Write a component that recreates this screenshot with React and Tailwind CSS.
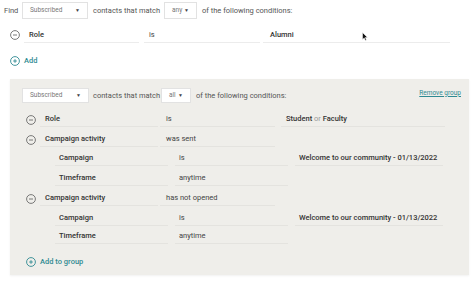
import React from "react";

const MinusIcon = () => (
  <svg width="10" height="10" viewBox="0 0 10 10" className="shrink-0">
    <circle cx="5" cy="5" r="4.4" fill="none" stroke="#6b6b6b" strokeWidth="0.9" />
    <line x1="3" y1="5" x2="7" y2="5" stroke="#6b6b6b" strokeWidth="0.9" />
  </svg>
);

const AddIcon = () => (
  <svg width="10" height="10" viewBox="0 0 10 10" className="shrink-0">
    <circle cx="5" cy="5" r="4.4" fill="none" stroke="#2f8a92" strokeWidth="0.9" />
    <line x1="3.2" y1="5" x2="6.8" y2="5" stroke="#2f8a92" strokeWidth="0.9" />
    <line x1="5" y1="3.2" x2="5" y2="6.8" stroke="#2f8a92" strokeWidth="0.9" />
  </svg>
);

const Dropdown = ({ label, className }) => (
  <div
    className={`flex items-center justify-between bg-white border border-[#e2e2e2] pl-[7px] pr-[7px] text-[6.5px] text-[#777] ${className}`}
  >
    <span>{label}</span>
    <span className="text-[5px] text-[#444]">▼</span>
  </div>
);

const Field = ({ className = "", line = "border-[#e4e3df]", children }) => (
  <div className={`h-[15px] flex items-center border-b ${line} ${className}`}>
    {children}
  </div>
);

const MainRow = ({ h, label, op, value }) => (
  <div className={`flex items-center pl-[16px] ${h}`}>
    <MinusIcon />
    <Field className="ml-[4px] w-[118px] pl-[5px] font-medium text-[#333]">{label}</Field>
    <Field className="ml-[2px] w-[115px] pl-[6px] text-[#444]">{op}</Field>
    {value ? (
      <Field className="ml-[6px] w-[164px] pl-[5px]">{value}</Field>
    ) : null}
  </div>
);

const SubRow = ({ h, label, op, value }) => (
  <div className={`flex items-center pl-[45px] ${h}`}>
    <Field className="w-[113px] pl-[4px] font-medium text-[#333]">{label}</Field>
    <Field className="ml-[7px] w-[113px] pl-[4px] text-[#444]">{op}</Field>
    {value ? (
      <Field className="ml-[7px] w-[148px] pl-[4px] font-medium text-[#333]">{value}</Field>
    ) : null}
  </div>
);

export default function App() {
  return (
    <div className="relative w-[474px] h-[281px] pt-[2px] overflow-hidden bg-white font-['Roboto',sans-serif] text-[7.5px] text-[#555]">
      {/* ===== TOP CONDITION ===== */}
      <div className="flex items-center h-[17px] pl-[4px]">
        <span className="w-[18px]">Find</span>
        <Dropdown label="Subscribed" className="w-[66px] h-[17px]" />
        <span className="ml-[5px] w-[71px]">contacts that match</span>
        <Dropdown label="any" className="w-[33px] h-[17px]" />
        <span className="ml-[5px]">of the following conditions:</span>
      </div>

      <div className="flex items-center h-[20px] mt-[6px] pl-[10px]">
        <MinusIcon />
        <Field line="border-[#ececec]" className="ml-[4px] w-[115px] pl-[5px] font-medium text-[#333]">
          Role
        </Field>
        <Field line="border-[#ececec]" className="ml-[5px] w-[116px] pl-[5px] text-[#444]">
          is
        </Field>
        <Field line="border-[#ececec]" className="ml-[3px] w-[187px] pl-[7px] font-medium text-[#333]">
          Alumni
        </Field>
      </div>

      <div className="flex items-center h-[16px] mt-[8px] pl-[10px] text-[#2f8a92] font-medium">
        <AddIcon />
        <span className="ml-[4px]">Add</span>
      </div>

      {/* ===== GROUP ===== */}
      <div className="ml-[10px] mt-[10px] w-[459px] h-[196px] pt-[9px] bg-[#efeeea] shadow-[0_1px_2px_rgba(0,0,0,0.06)]">
        <div className="flex items-center h-[15px] pl-[12px] pr-[8px]">
          <Dropdown label="Subscribed" className="w-[67px] h-[15px]" />
          <span className="ml-[4px] w-[68px]">contacts that match</span>
          <Dropdown label="all" className="w-[30px] h-[15px]" />
          <span className="ml-[5px]">of the following conditions:</span>
          <span className="ml-auto -mt-[4px] text-[6.5px] text-[#2f8a92] underline">Remove group</span>
        </div>

        <div className="mt-[6px]">
          <MainRow
            h="h-[21px]"
            label="Role"
            op="is"
            value={
              <span>
                <span className="font-medium text-[#333]">Student</span>
                <span className="text-[#999]"> or </span>
                <span className="font-medium text-[#333]">Faculty</span>
              </span>
            }
          />
          <MainRow h="h-[19px]" label="Campaign activity" op="was sent" />
          <SubRow h="h-[19px]" label="Campaign" op="is" value="Welcome to our community - 01/13/2022" />
          <SubRow h="h-[20px]" label="Timeframe" op="anytime" />
          <MainRow h="h-[21px]" label="Campaign activity" op="has not opened" />
          <SubRow h="h-[18px]" label="Campaign" op="is" value="Welcome to our community - 01/13/2022" />
          <SubRow h="h-[19px]" label="Timeframe" op="anytime" />
        </div>

        <div className="flex items-center h-[16px] mt-[8px] pl-[16px] text-[#2f8a92] font-medium">
          <AddIcon />
          <span className="ml-[4px]">Add to group</span>
        </div>
      </div>

      {/* mouse cursor */}
      <svg className="absolute left-[362px] top-[32px]" width="6" height="9" viewBox="0 0 6 9">
        <path d="M0.5 0.5 L0.5 7.5 L2.2 5.9 L3.4 8.5 L4.4 8 L3.3 5.5 L5.5 5.5 Z" fill="#111" stroke="#fff" strokeWidth="0.5" />
      </svg>
    </div>
  );
}
